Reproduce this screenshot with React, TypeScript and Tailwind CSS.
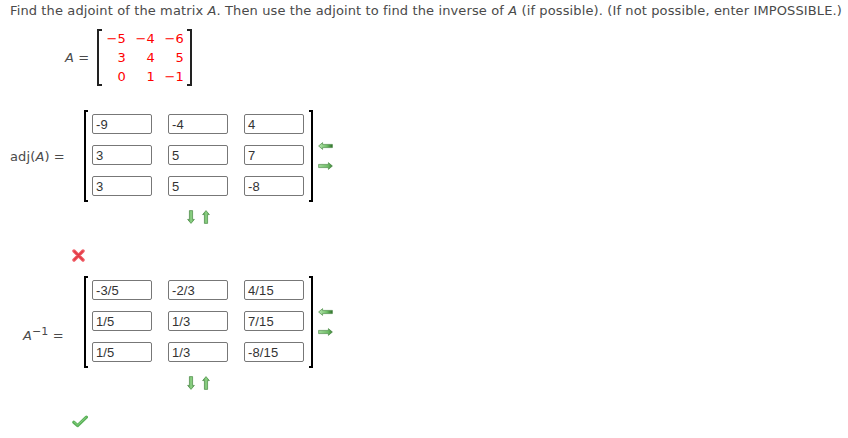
import React from "react";

const verdana = "font-['DejaVu_Sans',Verdana,sans-serif]";

function LeftArrow() {
  return (
    <svg width="15" height="8" viewBox="0 0 15 8">
      <defs>
        <linearGradient id="glh" x1="0" x2="1" y1="0" y2="0">
          <stop offset="0" stopColor="#b9e6b1" />
          <stop offset="0.6" stopColor="#6fbf67" />
          <stop offset="1" stopColor="#2f6e2a" />
        </linearGradient>
      </defs>
      <path d="M0.6 4 L4.6 0.6 L4.6 2.4 L14.4 2.4 L14.4 5.6 L4.6 5.6 L4.6 7.4 Z" fill="url(#glh)" stroke="#3d7f38" strokeWidth="0.6" />
    </svg>
  );
}

function RightArrow() {
  return (
    <svg width="15" height="8" viewBox="0 0 15 8">
      <defs>
        <linearGradient id="grh" x1="0" x2="1" y1="0" y2="0">
          <stop offset="0" stopColor="#9fd897" />
          <stop offset="0.7" stopColor="#6cbb64" />
          <stop offset="1" stopColor="#3b7d36" />
        </linearGradient>
      </defs>
      <path d="M14.4 4 L10.4 0.6 L10.4 2.4 L0.6 2.4 L0.6 5.6 L10.4 5.6 L10.4 7.4 Z" fill="url(#grh)" stroke="#3d7f38" strokeWidth="0.6" />
    </svg>
  );
}

function DownArrow() {
  return (
    <svg width="8" height="14" viewBox="0 0 8 14">
      <defs>
        <linearGradient id="gdv" x1="0" x2="1" y1="0" y2="0">
          <stop offset="0" stopColor="#3f8a3a" />
          <stop offset="0.5" stopColor="#8fd487" />
          <stop offset="1" stopColor="#5aa552" />
        </linearGradient>
      </defs>
      <path d="M4 13.4 L0.6 9.4 L2.4 9.4 L2.4 0.6 L5.6 0.6 L5.6 9.4 L7.4 9.4 Z" fill="url(#gdv)" stroke="#3d7f38" strokeWidth="0.6" />
    </svg>
  );
}

function UpArrow() {
  return (
    <svg width="8" height="14" viewBox="0 0 8 14">
      <defs>
        <linearGradient id="guv" x1="0" x2="1" y1="0" y2="0">
          <stop offset="0" stopColor="#3f8a3a" />
          <stop offset="0.5" stopColor="#8fd487" />
          <stop offset="1" stopColor="#5aa552" />
        </linearGradient>
      </defs>
      <path d="M4 0.6 L0.6 4.6 L2.4 4.6 L2.4 13.4 L5.6 13.4 L5.6 4.6 L7.4 4.6 Z" fill="url(#guv)" stroke="#3d7f38" strokeWidth="0.6" />
    </svg>
  );
}

function XMark() {
  return (
    <svg width="13" height="13" viewBox="0 0 13 13">
      <path d="M2 2 L11 11 M11 2 L2 11" stroke="#ee5a63" strokeWidth="3.4" strokeLinecap="round" />
      <path d="M2.5 2.5 L10.5 10.5 M10.5 2.5 L2.5 10.5" stroke="#e23a45" strokeWidth="1.4" strokeLinecap="round" />
    </svg>
  );
}

function CheckMark() {
  return (
    <svg width="16" height="13" viewBox="0 0 16 13">
      <polyline points="1.8,7.2 5.6,10.6 14.4,2.2" fill="none" stroke="#5cb25a" strokeWidth="3.2" strokeLinecap="round" strokeLinejoin="round" />
      <polyline points="2.2,7 5.6,10 14,2.4" fill="none" stroke="#86cf80" strokeWidth="1" strokeLinecap="round" strokeLinejoin="round" />
    </svg>
  );
}

function Box({ v }: { v: string }) {
  return (
    <div className="h-[20px] w-[60px] rounded-[2px] border border-[#777] bg-white pl-[3px] font-['Liberation_Sans',Arial,sans-serif] text-[13px] leading-[19px] text-[#333]">
      {v}
    </div>
  );
}

function AnswerMatrix({ rows }: { rows: string[][] }) {
  return (
    <div className="flex flex-col items-start">
      <div className="flex items-center">
        <div className="flex items-stretch">
          <div className="w-[4px] border-y-2 border-l-2 border-black" />
          <div className="grid grid-cols-[60px_60px_60px] gap-x-[16px] gap-y-[11px] pl-[4px] pr-[5px] pt-[4px] pb-[6px]">
            {rows.flat().map((v, i) => (
              <Box key={i} v={v} />
            ))}
          </div>
          <div className="w-[4px] border-y-2 border-r-2 border-black" />
        </div>
        <div className="ml-[5px] flex flex-col gap-[12px]">
          <LeftArrow />
          <RightArrow />
        </div>
      </div>
      <div className="mt-[8px] flex w-[229px] justify-center gap-[7px]">
        <DownArrow />
        <UpArrow />
      </div>
    </div>
  );
}

export default function App() {
  const A = [
    ["−5", "−4", "−6"],
    ["3", "4", "5"],
    ["0", "1", "−1"],
  ];
  return (
    <div className={`h-[438px] w-[848px] overflow-hidden bg-white ${verdana} text-[13px] tracking-[0.12px] text-[#4a4a4a]`}>
      <div className="pl-[10px] pt-[3px] leading-[16px] whitespace-nowrap">
        Find the adjoint of the matrix <i>A</i>. Then use the adjoint to find the inverse of <i>A</i> (if possible). (If not possible, enter IMPOSSIBLE.)
      </div>

      <div className="mt-[10px] flex items-center">
        <div className="ml-[65px] w-[32px] whitespace-nowrap">
          <i>A</i> =
        </div>
        <div className="flex items-stretch">
          <div className="w-[5px] border-y-2 border-l-2 border-[#222]" />
          <div className="grid grid-cols-[20px_20px_20px] gap-x-[9px] pl-[4px] pr-[3px] text-right leading-[19px] text-[#f00]">
            {A.flat().map((v, i) => (
              <div key={i}>{v}</div>
            ))}
          </div>
          <div className="w-[5px] border-y-2 border-r-2 border-[#222]" />
        </div>
      </div>

      <div className="mt-[24px] flex items-start">
        <div className="ml-[10px] mt-[39px] w-[74px] whitespace-nowrap leading-[16px]">
          adj(<i>A</i>) =
        </div>
        <AnswerMatrix
          rows={[
            ["-9", "-4", "4"],
            ["3", "5", "7"],
            ["3", "5", "-8"],
          ]}
        />
      </div>

      <div className="ml-[72px] mt-[25px]">
        <XMark />
      </div>

      <div className="mt-[14px] flex items-start">
        <div className="ml-[23px] mt-[52px] w-[61px] whitespace-nowrap leading-[16px]">
          <i>A</i>
          <sup className="text-[11px]">−1</sup> =
        </div>
        <AnswerMatrix
          rows={[
            ["-3/5", "-2/3", "4/15"],
            ["1/5", "1/3", "7/15"],
            ["1/5", "1/3", "-8/15"],
          ]}
        />
      </div>

      <div className="ml-[72px] mt-[25px]">
        <CheckMark />
      </div>
    </div>
  );
}
